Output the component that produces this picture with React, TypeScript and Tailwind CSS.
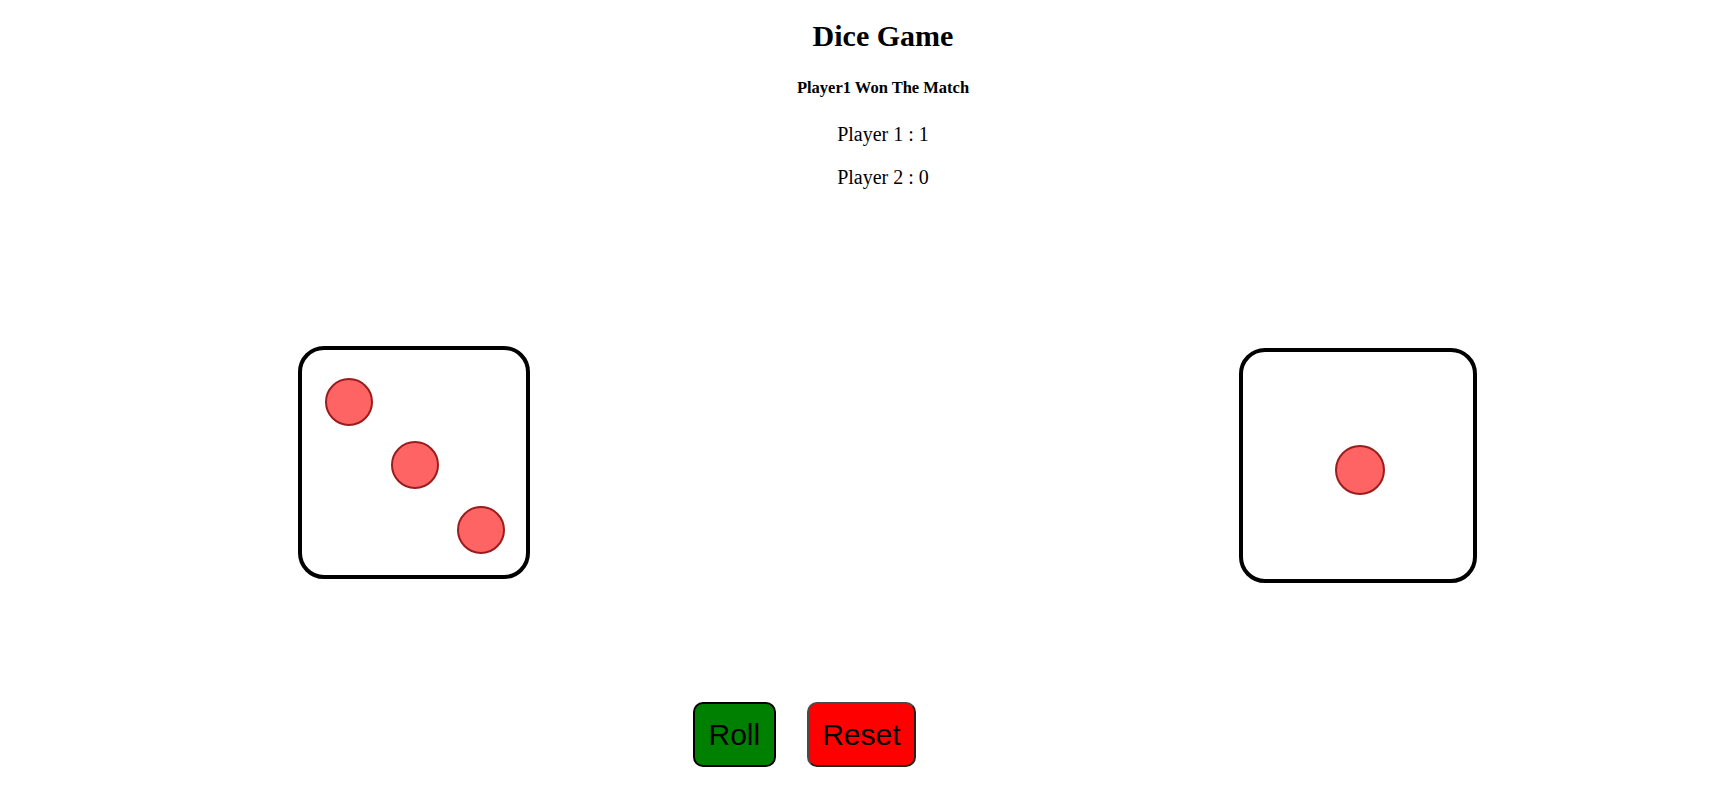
import React from 'react';

type DieProps = {
  dots: [number, number][];
  size: string;
  offset?: string;
  dot: string;
};

// dots are given as percent positions (0-100) inside the face
function Die({ dots, size, offset, dot }: DieProps) {
  return (
    <div className={`relative shrink-0 rounded-[26px] border-4 border-black bg-white ${size} ${offset ?? ''}`}>
      {dots.map(([x, y], i) => (
        <span
          key={i}
          className={`absolute -translate-x-1/2 -translate-y-1/2 rounded-full border-2 border-[#9b1c1c] bg-[#ff6464] ${dot}`}
          style={{ left: `${x}%`, top: `${y}%` }}
        />
      ))}
    </div>
  );
}

export default function App() {
  return (
    <main className="min-h-screen bg-white text-black font-['Liberation_Serif','Times_New_Roman',serif]">
      <section className="flex flex-col items-center pl-[36px]">
        <h1 className="mt-[21px] text-[30px] leading-[30px] font-bold">Dice Game</h1>
        <h4 className="mt-[29px] text-[16.5px] leading-[16px] font-bold">Player1 Won The Match</h4>
        <p className="mt-[28px] text-[20px] leading-[20px]">Player 1 : 1</p>
        <p className="mt-[23px] text-[20px] leading-[20px]">Player 2 : 0</p>
      </section>

      <section className="mt-[158px] flex items-start justify-between pl-[298px] pr-[253px]">
        <Die
          size="w-[232px] h-[233px]"
          offset="mt-px"
          dot="w-[48px] h-[48px]"
          dots={[
            [21, 23],
            [50.5, 51],
            [80, 80],
          ]}
        />
        <Die
          size="w-[238px] h-[235px]"
          offset="mt-[3px]"
          dot="w-[50px] h-[50px]"
          dots={[[51, 52]]}
        />
      </section>

      <section className="mt-[119px] flex gap-[31px] pl-[693px] font-['Liberation_Sans',Arial,sans-serif]">
        <button className="rounded-[10px] border-2 border-black bg-[#008000] px-[13.5px] py-[13px] text-[30px] leading-[35px] text-black">
          Roll
        </button>
        <button className="rounded-[10px] border-2 border-[#4a4a4a] border-r-[#222] border-b-[#222] bg-[#ff0000] px-[13.5px] py-[13px] text-[30px] leading-[35px] text-black">
          Reset
        </button>
      </section>
    </main>
  );
}
